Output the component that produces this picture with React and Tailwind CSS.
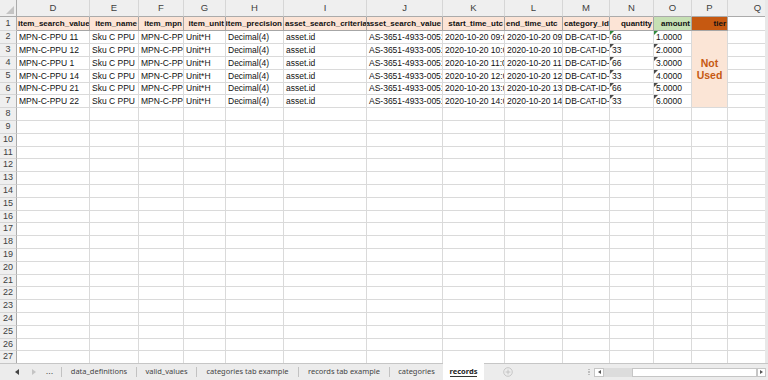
import React from 'react';

const LETTERS = ['D', 'E', 'F', 'G', 'H', 'I', 'J', 'K', 'L', 'M', 'N', 'O', 'P', 'Q'];

// header row 1: text + alignment + fill
const HEADERS = [
  { text: 'item_search_value', right: false },
  { text: 'item_name', right: true },
  { text: 'item_mpn', right: true },
  { text: 'item_unit', right: true },
  { text: 'item_precision', right: true },
  { text: 'asset_search_criteria', right: false },
  { text: 'asset_search_value', right: true },
  { text: 'start_time_utc', right: true },
  { text: 'end_time_utc', right: false },
  { text: 'category_id', right: false },
  { text: 'quantity', right: true },
  { text: 'amount', right: true, bg: 'bg-[#c6e0b4]' },
  { text: 'tier', right: true, bg: 'bg-[#c65911]' },
];

const RECORDS = [
  { mpn: 'MPN-C-PPU 11', hh: '09', qty: '66', amount: '1.0000' },
  { mpn: 'MPN-C-PPU 12', hh: '10', qty: '33', amount: '2.0000' },
  { mpn: 'MPN-C-PPU 1', hh: '11', qty: '66', amount: '3.0000' },
  { mpn: 'MPN-C-PPU 14', hh: '12', qty: '33', amount: '4.0000' },
  { mpn: 'MPN-C-PPU 21', hh: '13', qty: '66', amount: '5.0000' },
  { mpn: 'MPN-C-PPU 22', hh: '14', qty: '33', amount: '6.0000' },
];

const cell = 'border-r border-b border-r-[#dadada] border-b-[#dadada] overflow-hidden whitespace-nowrap flex items-center px-[2px]';
const rowHead = 'flex items-center justify-center bg-[#efefef] text-[#404040] text-[9px] border-r border-b border-r-[#ababab] border-b-[#d6d6d6]';

const Marker = ({ green }) => (
  <div
    className={
      green
        ? 'absolute top-0 left-0 w-0 h-0 border-t-[4px] border-r-[4px] border-r-transparent border-t-[#2f8a3c]'
        : 'absolute top-0 left-0 w-0 h-0 border-t-[4px] border-r-[4px] border-r-transparent border-t-[#4a4a4a]'
    }
  />
);

const Grid = () => {
  const cells = [];

  // column letters
  cells.push(
    <div key="corner" className="relative bg-[#efefef] border-r border-b border-r-[#ababab] border-b-[#ababab]">
      <div className="absolute right-[2px] bottom-[2px] w-0 h-0 border-l-[8px] border-l-transparent border-b-[8px] border-b-[#c4c4c4]" />
    </div>
  );
  LETTERS.forEach((l) => {
    cells.push(
      <div key={'c' + l} className="flex items-center justify-center bg-[#efefef] text-[#404040] text-[9.5px] border-r border-b border-r-[#d6d6d6] border-b-[#ababab]">
        {l}
      </div>
    );
  });

  // row 1: field names
  cells.push(<div key="r1" className={rowHead}>1</div>);
  HEADERS.forEach((h) => {
    cells.push(
      <div
        key={'h' + h.text}
        className={`${h.bg || 'bg-[#fce4d6]'} ${h.right ? 'justify-end' : 'justify-start'} border-r border-b border-r-[#a6a6a6] border-b-[#a6a6a6] overflow-hidden whitespace-nowrap flex items-center px-[1px] font-bold text-[8px] text-[#111]`}
      >
        {h.text}
      </div>
    );
  });
  cells.push(<div key="h-q" className={cell} />);

  // rows 2-7: records
  RECORDS.forEach((r, i) => {
    const n = i + 2;
    cells.push(<div key={'r' + n} className={rowHead}>{n}</div>);
    cells.push(<div key={'d' + n} className={cell}>{r.mpn}</div>);
    cells.push(<div key={'e' + n} className={cell}>Sku C PPU</div>);
    cells.push(<div key={'f' + n} className={cell}>{r.mpn}</div>);
    cells.push(<div key={'g' + n} className={cell}>Unit*H</div>);
    cells.push(<div key={'h' + n} className={cell}>Decimal(4)</div>);
    cells.push(<div key={'i' + n} className={cell}>asset.id</div>);
    cells.push(<div key={'j' + n} className={cell}>AS-3651-4933-0051</div>);
    cells.push(<div key={'k' + n} className={cell}>2020-10-20 {r.hh}:00:00</div>);
    cells.push(<div key={'l' + n} className={cell}>2020-10-20 {r.hh}:59:59</div>);
    cells.push(<div key={'m' + n} className={cell}>DB-CAT-ID-0001</div>);
    cells.push(
      <div key={'n' + n} className={`${cell} relative`}>
        <Marker green={i === 0} />
        {r.qty}
      </div>
    );
    cells.push(
      <div key={'o' + n} className={`${cell} relative`}>
        <Marker green={i === 0} />
        {r.amount}
      </div>
    );
    if (i === 0) {
      cells.push(
        <div
          key="p-merged"
          className="row-span-6 bg-[#fbe5d6] border-r border-b border-r-[#dadada] border-b-[#dadada] flex flex-col items-center justify-center text-[#c65911] font-bold text-[10.5px] leading-[12px]"
        >
          <span>Not</span>
          <span>Used</span>
        </div>
      );
    }
    cells.push(<div key={'q' + n} className={cell} />);
  });

  // rows 8-27: empty
  for (let n = 8; n <= 27; n++) {
    cells.push(<div key={'r' + n} className={rowHead}>{n}</div>);
    LETTERS.forEach((l) => {
      cells.push(<div key={l + n} className={cell} />);
    });
  }

  return (
    <div className="grid grid-cols-[17px_73px_49px_45px_42px_58px_83px_76px_62px_58px_47px_44px_38px_36px_60px] grid-rows-[17px_14px_repeat(5,13px_13px_13px_13px_12px)_13px] text-[8.5px] text-[#111]">
      {cells}
    </div>
  );
};

const Sep = () => <div className="w-px h-[10px] bg-[#c2c2c2] self-center" />;

const TabBar = () => (
  <div className="h-[17px] flex bg-[#ececec] border-t border-t-[#c6c6c6] text-[#444] text-[7.5px] font-['Noto_Sans',sans-serif]">
    <div className="w-[61px] flex items-center">
      <svg width="4" height="6" viewBox="0 0 4 6" className="ml-[15px]">
        <path d="M4 0 L0 3 L4 6 Z" fill="#444" />
      </svg>
      <svg width="4" height="6" viewBox="0 0 4 6" className="ml-[13px]">
        <path d="M0 0 L4 3 L0 6 Z" fill="#c4c4c4" />
      </svg>
      <span className="ml-[10px] tracking-[0.5px]">...</span>
    </div>
    <Sep />
    <div className="w-[74px] flex items-center justify-center">data_definitions</div>
    <Sep />
    <div className="w-[59px] flex items-center justify-center">valid_values</div>
    <Sep />
    <div className="w-[101px] flex items-center justify-center">categories tab example</div>
    <Sep />
    <div className="w-[90px] flex items-center justify-center">records tab example</div>
    <Sep />
    <div className="w-[53px] flex items-center justify-center">categories</div>
    <div className="w-[41px] -mt-px flex items-center justify-center bg-white">
      <span className="font-bold text-[#222] border-b border-b-[#333] leading-[10px]">records</span>
    </div>
    <div className="w-[48px] flex items-center justify-center">
      <svg width="10" height="10" viewBox="0 0 10 10">
        <circle cx="5" cy="5" r="4.3" fill="none" stroke="#bdbdbd" strokeWidth="0.8" />
        <path d="M5 2.6 V7.4 M2.6 5 H7.4" stroke="#bdbdbd" strokeWidth="0.8" />
      </svg>
    </div>
    <div className="w-[52px]" />
    <div className="w-[10px] flex flex-col items-center justify-center gap-[1px]">
      <div className="w-[1.5px] h-[1.5px] bg-[#bdbdbd]" />
      <div className="w-[1.5px] h-[1.5px] bg-[#bdbdbd]" />
      <div className="w-[1.5px] h-[1.5px] bg-[#bdbdbd]" />
    </div>
    <div className="flex-1 flex items-center pr-[2px]">
      <div className="w-[10px] h-[9px] bg-white border border-[#c6c6c6] flex items-center justify-center">
        <svg width="3" height="4" viewBox="0 0 3 4"><path d="M3 0 L0 2 L3 4 Z" fill="#555" /></svg>
      </div>
      <div className="w-[28px] h-[9px] bg-[#dcdcdc]" />
      <div className="flex-1 h-[9px] bg-white border border-[#c6c6c6]" />
      <div className="w-[9px] h-[9px] bg-white border border-[#c6c6c6] flex items-center justify-center">
        <svg width="3" height="4" viewBox="0 0 3 4"><path d="M0 0 L3 2 L0 4 Z" fill="#555" /></svg>
      </div>
    </div>
  </div>
);

export default function App() {
  return (
    <div className="w-[768px] h-[380px] flex flex-col bg-white overflow-hidden font-['Liberation_Sans',Arial,sans-serif]">
      <div className="h-[363px] flex overflow-hidden">
        <div className="w-[765px] overflow-hidden">
          <Grid />
        </div>
        <div className="flex-1 bg-[#e8e8e8]" />
      </div>
      <TabBar />
    </div>
  );
}
